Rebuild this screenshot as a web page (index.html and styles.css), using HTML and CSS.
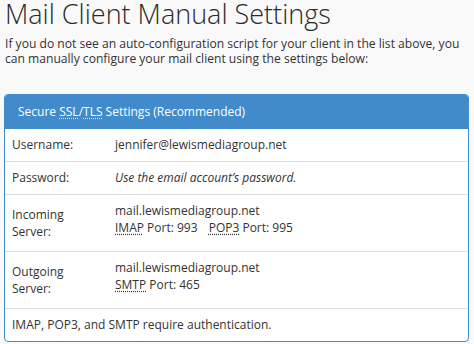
FILE: index.html
```html
<!DOCTYPE html>
<html lang="en">
<head>
    <meta charset="UTF-8">
    <title>Mail Client Manual Settings</title>
    <link rel="stylesheet" href="styles.css">
</head>
<body>
    <h1>Mail Client Manual Settings</h1>
    <p class="intro">If you do not see an auto-configuration script for your client in the list above, you can manually configure your mail client using the settings below:</p>

    <div class="panel">
        <div class="panel-heading">Secure <abbr title="Secure Sockets Layer">SSL</abbr>/<abbr title="Transport Layer Security">TLS</abbr> Settings (Recommended)</div>

        <div class="row">
            <div class="label">Username:</div>
            <div class="value">jennifer@lewismediagroup.net</div>
        </div>
        <div class="row">
            <div class="label">Password:</div>
            <div class="value"><em>Use the email account’s password.</em></div>
        </div>
        <div class="row tall">
            <div class="label">Incoming<br>Server:</div>
            <div class="value">
                mail.lewismediagroup.net<br>
                <abbr title="Internet Message Access Protocol">IMAP</abbr> Port: 993
                <span class="port"><abbr title="Post Office Protocol 3">POP3</abbr> Port: 995</span>
            </div>
        </div>
        <div class="row tall">
            <div class="label">Outgoing<br>Server:</div>
            <div class="value">
                mail.lewismediagroup.net<br>
                <abbr title="Simple Mail Transfer Protocol">SMTP</abbr> Port: 465
            </div>
        </div>
        <div class="row footer">IMAP, POP3, and SMTP require authentication.</div>
    </div>
</body>
</html>
```

FILE: styles.css
```css
body {
    margin: 0;
    padding: 2px 0 0 4px;
    background: #f9f9f9;
    color: #333;
    font-family: "Open Sans", sans-serif;
    font-size: 12px;
    line-height: 17px;
}
h1 {
    margin: 0 0 0 1px;
    font-size: 27px;
    line-height: 23px;
    font-weight: 300;
    color: #2b2b2b;
}
.intro {
    margin: 11px 0 28px 1px;
    font-size: 12.1px;
    line-height: 15px;
}
abbr {
    text-decoration: underline dotted;
    text-underline-offset: 2px;
}
.panel {
    margin-right: 5px;
    border: 1px solid #428bca;
    border-radius: 4px;
    background: #fff;
    overflow: hidden;
}
.panel-heading {
    background: #428bca;
    color: #fff;
    font-size: 12px;
    padding: 8px 13px 9px;
}
.panel-heading abbr {
    text-decoration-color: #cfe0f0;
}
.row {
    display: grid;
    grid-template-columns: 103px 1fr;
    padding: 7px 7px 8px;
    border-bottom: 1px solid #ddd;
}
.row:last-child {
    border-bottom: none;
}
.tall .label {
    align-self: center;
}
.tall .value {
    padding-bottom: 7px;
}
.port {
    margin-left: 8px;
}
.footer {
    display: block;
}
```
